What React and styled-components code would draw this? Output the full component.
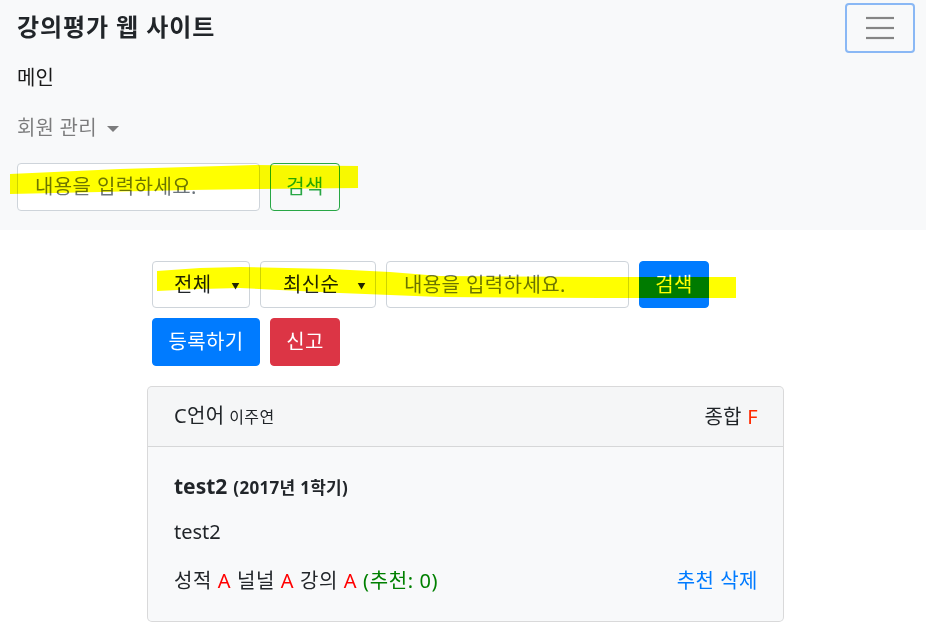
import React from "react";
import styled, { createGlobalStyle } from "styled-components";

const Global = createGlobalStyle`
  html, body { margin: 0; padding: 0; background: #fff; }
  body {
    font-family: "Noto Sans", "Noto Sans CJK KR", sans-serif;
    color: #212529;
    -webkit-font-smoothing: antialiased;
  }
  * { box-sizing: border-box; }
`;

const Page = styled.div`
  position: relative;
  width: 926px;
  min-height: 627px;
`;

const Navbar = styled.nav`
  background: #f8f9fa;
  padding: 3px 11px 19px 17px;
`;

const BrandRow = styled.div`
  display: flex;
  align-items: center;
  justify-content: space-between;
  height: 50px;
`;

const Brand = styled.a`
  font-size: 24px;
  font-weight: 700;
  letter-spacing: 0.9px;
  line-height: 30px;
  color: #212529;
  margin-top: -2px;
`;

const Toggler = styled.button`
  width: 70px;
  height: 50px;
  border: 2px solid #8ab8f5;
  border-radius: 4px;
  background: transparent;
  display: flex;
  align-items: center;
  justify-content: center;
  padding: 0;
`;

const NavList = styled.ul`
  list-style: none;
  margin: 0;
  padding: 0;
`;

const NavItem = styled.li`
  height: 50px;
  display: flex;
  align-items: center;
  font-size: 20px;
  letter-spacing: 0.2px;
  line-height: 24px;
  color: ${(p) => (p.$active ? "rgba(0,0,0,.9)" : "rgba(0,0,0,.5)")};
`;

const Caret = styled.span`
  display: inline-block;
  width: 0;
  height: 0;
  margin-left: 10px;
  margin-top: 2px;
  border-left: 6px solid transparent;
  border-right: 6px solid transparent;
  border-top: 6px solid rgba(0,0,0,.5);
`;

const NavForm = styled.form`
  display: flex;
  gap: 10px;
  margin-top: 10px;
`;

const Input = styled.div`
  width: ${(p) => p.$w}px;
  height: ${(p) => p.$h || 48}px;
  border: 1px solid #ced4da;
  border-radius: 4px;
  background: #fff;
  display: flex;
  align-items: center;
  padding-left: 17px;
  font-size: 20px;
  letter-spacing: 0.4px;
  color: #6c757d;
  line-height: 24px;
`;

const Button = styled.button`
  height: ${(p) => p.$h || 48}px;
  width: ${(p) => p.$w}px;
  border-radius: 4px;
  font-family: inherit;
  font-size: 20px;
  letter-spacing: 0.3px;
  line-height: 24px;
  padding: 0;
  border: 1px solid ${(p) => p.$border};
  background: ${(p) => p.$bg};
  color: ${(p) => p.$color};
  display: flex;
  align-items: center;
  justify-content: center;
`;

const Section = styled.section`
  width: 637px;
  margin: 31px 0 0 147px;
`;

const FormRow = styled.div`
  display: flex;
  gap: 10px;
  padding-left: 5px;
  margin-bottom: 10px;
`;

const Select = styled.div`
  width: ${(p) => p.$w}px;
  height: 47px;
  border: 1px solid #ced4da;
  border-radius: 4px;
  background: #fff;
  display: flex;
  align-items: center;
  justify-content: space-between;
  padding: 0 9px 0 ${(p) => p.$pl}px;
  font-size: 20px;
  letter-spacing: 0.4px;
  line-height: 24px;
  color: #212529;
`;

const Arrow = styled.span`
  font-size: 8px;
  color: #212529;
  margin-top: 2px;
`;

const Card = styled.div`
  margin-top: 20px;
  border: 1px solid rgba(0,0,0,.125);
  border-radius: 5px;
  background: #f8f9fa;
  overflow: hidden;
`;

const CardHeader = styled.div`
  height: 60px;
  padding: 0 25px 0 26px;
  display: flex;
  align-items: center;
  justify-content: space-between;
  background: rgba(0,0,0,.01);
  border-bottom: 1px solid rgba(0,0,0,.125);
  font-size: 20px;
  letter-spacing: 0.3px;
  line-height: 24px;
`;

const Small = styled.small`
  font-size: 16px;
  margin-left: 5px;
`;

const CardBody = styled.div`
  padding: 24px 25px 25px 26px;
`;

const Title = styled.h5`
  margin: 0 0 14px;
  font-size: 21px;
  font-weight: 700;
  line-height: 30px;
`;

const TitleSmall = styled.small`
  font-size: 17px;
  font-weight: 700;
  letter-spacing: 0.3px;
  margin-left: 6px;
`;

const Text = styled.p`
  margin: 0 0 19px;
  font-size: 20px;
  line-height: 30px;
`;

const FooterRow = styled.div`
  display: flex;
  justify-content: space-between;
  align-items: center;
  height: 30px;
  font-size: 20px;
  letter-spacing: 0.6px;
  line-height: 30px;
`;

const Colored = styled.span`
  color: ${(p) => p.$c};
`;

const Link = styled.a`
  color: #007bff;
  letter-spacing: 0.5px;
`;

const Highlight = styled.svg`
  position: absolute;
  left: 0;
  top: 0;
  width: 926px;
  height: 627px;
  pointer-events: none;
  mix-blend-mode: multiply;
`;

export default function App() {
  return (
    <Page>
      <Global />
      <Navbar>
        <BrandRow>
          <Brand>강의평가 웹 사이트</Brand>
          <Toggler>
            <svg width="30" height="24" viewBox="0 0 30 24">
              <g stroke="#858585" strokeWidth="2.2">
                <line x1="1" y1="2" x2="29" y2="2" />
                <line x1="1" y1="12" x2="29" y2="12" />
                <line x1="1" y1="22" x2="29" y2="22" />
              </g>
            </svg>
          </Toggler>
        </BrandRow>
        <NavList>
          <NavItem $active>메인</NavItem>
          <NavItem>
            회원 관리<Caret />
          </NavItem>
        </NavList>
        <NavForm>
          <Input $w={243}>내용을 입력하세요.</Input>
          <Button $w={70} $border="#28a745" $bg="transparent" $color="#28a745">
            검색
          </Button>
        </NavForm>
      </Navbar>
      <Section>
        <FormRow>
          <Select $w={98} $pl={21}>
            전체<Arrow>▼</Arrow>
          </Select>
          <Select $w={116} $pl={22}>
            최신순<Arrow>▼</Arrow>
          </Select>
          <Input $w={243} $h={47}>내용을 입력하세요.</Input>
          <Button $w={70} $h={47} $border="#007bff" $bg="#007bff" $color="#fff">
            검색
          </Button>
        </FormRow>
        <FormRow>
          <Button $w={108} $border="#007bff" $bg="#007bff" $color="#fff">
            등록하기
          </Button>
          <Button $w={70} $border="#dc3545" $bg="#dc3545" $color="#fff">
            신고
          </Button>
        </FormRow>
        <Card>
          <CardHeader>
            <span>
              C언어<Small>이주연</Small>
            </span>
            <span>
              종합 <Colored $c="#ff2a00">F</Colored>
            </span>
          </CardHeader>
          <CardBody>
            <Title>
              test2<TitleSmall>(2017년 1학기)</TitleSmall>
            </Title>
            <Text>test2</Text>
            <FooterRow>
              <span>
                성적 <Colored $c="#ff0000">A</Colored> 널널{" "}
                <Colored $c="#ff0000">A</Colored> 강의{" "}
                <Colored $c="#ff0000">A</Colored>{" "}
                <Colored $c="#008000">(추천: 0)</Colored>
              </span>
              <Link>추천 삭제</Link>
            </FooterRow>
          </CardBody>
        </Card>
      </Section>
      <Highlight viewBox="0 0 926 627">
        <polygon
          fill="#ffff00"
          points="10,174 120,169 255,165 358,166 358,188 260,189 190,190 100,192 10,194"
        />
        <polygon
          fill="#ffff00"
          points="157,271 200,268 240,267 330,269 390,272 440,276 600,277 736,277 736,298 600,298 440,297 340,293 240,288 200,289 157,291"
        />
      </Highlight>
    </Page>
  );
}
